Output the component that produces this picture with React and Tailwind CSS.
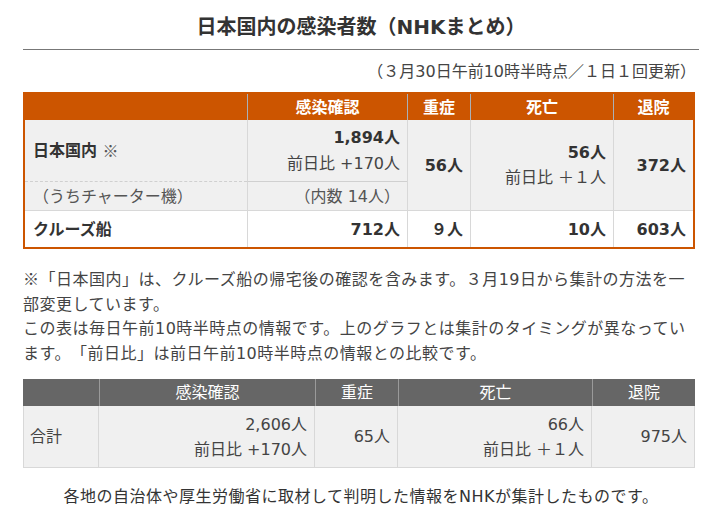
export default function App() {
  const hdr = "bg-[#cc5500] text-white font-bold flex items-center justify-center";
  const ghdr = "bg-[#666666] text-white flex items-center justify-center";
  const cjk = "font-['Noto_Sans_CJK_JP',sans-serif]";
  return (
    <div className="w-[722px] h-[512px] overflow-hidden bg-white text-[#333] font-['DejaVu_Sans','Noto_Sans_CJK_JP',sans-serif] text-[16px] px-[23px] [text-spacing-trim:space-all]">
      <div className="pt-[12px] pb-[7px] border-b border-[#777] text-center text-[20px] leading-[30px] font-bold text-[#333]">
        日本国内の感染者数（NHKまとめ）
      </div>
      <div className="mt-[10px] leading-[24px] text-right pr-[3px] text-[#444]">
        （３月30日午前10時半時点／１日１回更新）
      </div>

      <div className="mt-[8px] w-[672px] border-2 border-[#cc5500] grid grid-cols-[222px_160px_63px_143px_80px] grid-rows-[26px_62px_29px_36px] leading-[25px]">
        <div className={hdr}></div>
        <div className={hdr + " border-l border-[#aab0b8]"}>感染確認</div>
        <div className={hdr + " border-l border-[#aab0b8]"}>重症</div>
        <div className={hdr + " border-l border-[#aab0b8]"}>死亡</div>
        <div className={hdr + " border-l border-[#aab0b8]"}>退院</div>

        <div className="bg-[#f0f0f0] border-b border-dashed border-[#d0d0d0] flex items-center pl-[8px] font-bold text-[#333] whitespace-pre">
          日本国内 <span className={cjk + " font-normal text-[#555]"}>※</span>
        </div>
        <div className="bg-[#f0f0f0] border-l border-solid border-l-[#d8d8d8] border-b border-b-[#d0d0d0] border-dashed flex flex-col items-end justify-center pr-[7px] leading-[26px]">
          <div className="font-bold text-[#333]">1,894人</div>
          <div className="text-[#444]">前日比 +170人</div>
        </div>
        <div className="row-span-2 bg-[#f0f0f0] border-l border-b border-[#d8d8d8] flex items-center justify-end pr-[7px] font-bold">
          56人
        </div>
        <div className="row-span-2 bg-[#f0f0f0] border-l border-b border-[#d8d8d8] flex flex-col items-end justify-center pr-[7px]">
          <div className="font-bold text-[#333]">56人</div>
          <div className="text-[#444]">前日比 ＋１人</div>
        </div>
        <div className="row-span-2 bg-[#f0f0f0] border-l border-b border-[#d8d8d8] flex items-center justify-end pr-[7px] font-bold">
          372人
        </div>

        <div className="bg-[#f0f0f0] border-b border-[#d8d8d8] flex items-center pl-[8px] text-[#555]">
          （うちチャーター機）
        </div>
        <div className="bg-[#f0f0f0] border-l border-b border-[#d8d8d8] flex items-center justify-end pr-[7px] text-[#555]">
          （内数 14人）
        </div>

        <div className="bg-white flex items-center pl-[8px] font-bold">クルーズ船</div>
        <div className="bg-white border-l border-[#d8d8d8] flex items-center justify-end pr-[7px] font-bold">712人</div>
        <div className="bg-white border-l border-[#d8d8d8] flex items-center justify-end pr-[7px] font-bold">９人</div>
        <div className="bg-white border-l border-[#d8d8d8] flex items-center justify-end pr-[7px] font-bold">10人</div>
        <div className="bg-white border-l border-[#d8d8d8] flex items-center justify-end pr-[7px] font-bold">603人</div>
      </div>

      <div className="mt-[17px] leading-[24.5px] text-[#444] whitespace-nowrap tracking-[0.5px]">
        <span className={cjk}>※</span>「日本国内」は、クルーズ船の帰宅後の確認を含みます。３月19日から集計の方法を一
        <br />
        部変更しています。
        <br />
        この表は毎日午前10時半時点の情報です。上のグラフとは集計のタイミングが異なってい
        <br />
        ます。「前日比」は前日午前10時半時点の情報との比較です。
      </div>

      <div className="mt-[13px] w-[672px] grid grid-cols-[76px_216px_83px_194px_103px] grid-rows-[27px_62px] leading-[25px] text-[#444]">
        <div className={ghdr}></div>
        <div className={ghdr + " border-l border-[#9a9a9a]"}>感染確認</div>
        <div className={ghdr + " border-l border-[#9a9a9a]"}>重症</div>
        <div className={ghdr + " border-l border-[#9a9a9a]"}>死亡</div>
        <div className={ghdr + " border-l border-[#9a9a9a]"}>退院</div>

        <div className="bg-[#f0f0f0] border-l border-b border-r border-[#d8d8d8] flex items-center pl-[6px]">合計</div>
        <div className="bg-[#f0f0f0] border-b border-r border-[#d8d8d8] flex flex-col items-end justify-center pr-[7px]">
          <div>2,606人</div>
          <div>前日比 +170人</div>
        </div>
        <div className="bg-[#f0f0f0] border-b border-r border-[#d8d8d8] flex items-center justify-end pr-[7px]">65人</div>
        <div className="bg-[#f0f0f0] border-b border-r border-[#d8d8d8] flex flex-col items-end justify-center pr-[7px]">
          <div>66人</div>
          <div>前日比 ＋１人</div>
        </div>
        <div className="bg-[#f0f0f0] border-b border-r border-[#d8d8d8] flex items-center justify-end pr-[7px]">975人</div>
      </div>

      <div className="mt-[17px] leading-[24.5px] text-center text-[#333] tracking-[0.5px]">
        各地の自治体や厚生労働省に取材して判明した情報をNHKが集計したものです。
      </div>
    </div>
  );
}
